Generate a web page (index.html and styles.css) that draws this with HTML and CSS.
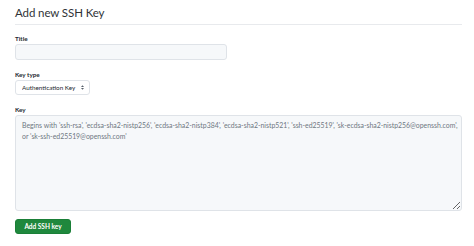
FILE: index.html
```html
<!DOCTYPE html>
<html lang="en">
<head>
  <meta charset="UTF-8">
  <meta name="viewport" content="width=device-width, initial-scale=1.0">
  <title>Add new SSH Key</title>
  <link rel="stylesheet" href="styles.css">
</head>
<body>
  <div id="container">
    <h2 class="subhead">Add new SSH Key</h2>
    <form id="sshForm">
      <div class="field">
        <label for="title">Title</label>
        <input type="text" id="title" class="control title-input">
      </div>
      <div class="field">
        <label for="keytype">Key type</label>
        <div class="select-wrap">
          <select id="keytype" class="control select">
            <option>Authentication Key</option>
            <option>Signing Key</option>
          </select>
          <svg class="select-arrow" viewBox="0 0 8 12" width="3" height="5">
            <path d="M4 0L8 4.5H0z M4 12L0 7.5H8z" fill="#57606a"/>
          </svg>
        </div>
      </div>
      <div class="field">
        <label for="key">Key</label>
        <textarea id="key" class="control key-input" placeholder="Begins with 'ssh-rsa', 'ecdsa-sha2-nistp256', 'ecdsa-sha2-nistp384', 'ecdsa-sha2-nistp521', 'ssh-ed25519', 'sk-ecdsa-sha2-nistp256@openssh.com', or 'sk-ssh-ed25519@openssh.com'"></textarea>
      </div>
      <button type="submit" class="btn-primary">Add SSH key</button>
    </form>
  </div>
</body>
</html>
```

FILE: styles.css
```css
* {
  margin: 0;
  padding: 0;
  box-sizing: border-box;
  font-family: Lato, "Open Sans", sans-serif;
}
body {
  background: #ffffff;
  color: #24292f;
}
#container {
  width: 462px;
  padding: 3px 0 0 15px;
}
.subhead {
  font-size: 11.5px;
  font-weight: 400;
  letter-spacing: -0.1px;
  line-height: 20px;
  padding-bottom: 1px;
  border-bottom: 1px solid #e8eaed;
  color: #2f3337;
}
#sshForm {
  display: flex;
  flex-direction: column;
  padding-top: 9px;
}
.field {
  display: flex;
  flex-direction: column;
  align-items: flex-start;
  margin-bottom: 10px;
}
label {
  font-size: 6.3px;
  font-weight: 700;
  line-height: 10px;
  color: #24292f;
}
.control {
  display: block;
  font-size: 6.3px;
  background: #f6f8fa;
  border: 1px solid #dfe3e8;
  border-radius: 3px;
  outline: none;
  color: #24292f;
}
.title-input {
  width: 212px;
  height: 16px;
}
.select-wrap {
  position: relative;
}
.select {
  appearance: none;
  -webkit-appearance: none;
  background: #ffffff;
  width: 75px;
  height: 15px;
  padding: 0 0 0 6px;
}
.select-arrow {
  position: absolute;
  right: 6px;
  top: 5px;
}
.key-input {
  width: 447px;
  height: 96px;
  padding: 4px 3px 5px 6px;
  font-size: 6.9px;
  line-height: 10.5px;
  resize: vertical;
}
.key-input::placeholder {
  color: #6e7781;
}
.btn-primary {
  align-self: flex-start;
  margin-top: -2px;
  width: 56px;
  height: 15px;
  font-size: 6.5px;
  font-weight: 700;
  color: #ffffff;
  background: #1f883d;
  border: 1px solid #1a7f37;
  border-radius: 3px;
}
```
